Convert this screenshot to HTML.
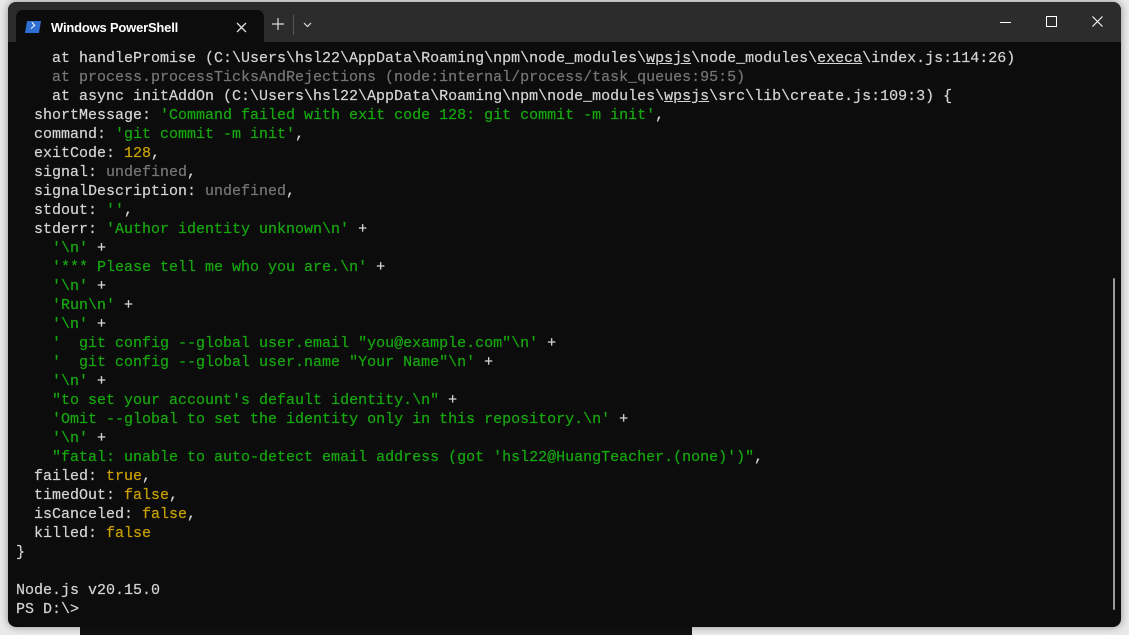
<!DOCTYPE html>
<html><head><meta charset="utf-8"><style>
html,body{margin:0;padding:0;width:1129px;height:635px;overflow:hidden;background:#e9e9e9;position:relative}
.dk{position:absolute;left:80px;top:620px;width:612px;height:15px;background:#111}
.win{position:absolute;left:8px;top:2px;width:1113px;height:625px;background:#0c0c0c;border-radius:8px;overflow:hidden;box-shadow:0 0 8px rgba(0,0,0,.4)}
.tb{position:absolute;left:0;top:0;width:100%;height:40px;background:#2c2c2c}
.tab{position:absolute;left:8px;top:8px;width:248px;height:34px;background:#0c0c0c;border-radius:7px 7px 0 0}
.tab .t{position:absolute;left:35px;top:10px;font:13px "Liberation Sans",sans-serif;color:#fff;font-weight:bold;letter-spacing:-.2px}
.ps{position:absolute;left:10px;top:11px;width:14px;height:12px;background:#2f6fd1;transform:skewX(-10deg)}
.ps:after{content:"";position:absolute;left:3px;top:2px;width:4px;height:4px;border-right:1.5px solid #fff;border-bottom:1.5px solid #fff;transform:rotate(-45deg)}
pre{position:absolute;left:8px;top:47px;margin:0;font:15px/19px "Liberation Mono",monospace;color:#d4d4d4;-webkit-text-stroke:0.2px}
.g{color:#16a80f}.y{color:#c9a000}.m{color:#767676}u{text-decoration:underline}
.sb{position:absolute;left:1105px;top:276px;width:2px;height:332px;background:#9a9a9a;border-radius:1px}
</style></head><body>
<div class="dk"></div>
<div class="win">
<div class="tb"></div>
<div class="tab"><div class="ps"></div><div class="t">Windows PowerShell</div>
<svg style="position:absolute;left:220px;top:12px" width="11" height="11"><path d="M1 1L10 10M10 1L1 10" stroke="#ddd" stroke-width="1.3"/></svg></div>
<svg style="position:absolute;left:264px;top:16px" width="12" height="12"><path d="M6 0V12M0 6H12" stroke="#ddd" stroke-width="1.2"/></svg>
<div style="position:absolute;left:285px;top:13px;width:1px;height:20px;background:#555"></div>
<svg style="position:absolute;left:295px;top:20px" width="9" height="6"><path d="M1 1L4.5 4.5L8 1" stroke="#ddd" fill="none" stroke-width="1.2"/></svg>
<div style="position:absolute;left:992px;top:20px;width:11px;height:1px;background:#fff"></div>
<div style="position:absolute;left:1038px;top:14px;width:9px;height:9px;border:1px solid #fff"></div>
<svg style="position:absolute;left:1084px;top:14px" width="11" height="11"><path d="M0.5 0.5L10.5 10.5M10.5 0.5L0.5 10.5" stroke="#fff" stroke-width="1.1"/></svg>
<pre>    at handlePromise (C:\Users\hsl22\AppData\Roaming\npm\node_modules\<u>wpsjs</u>\node_modules\<u>execa</u>\index.js:114:26)
<span class="m">    at process.processTicksAndRejections (node:internal/process/task_queues:95:5)</span>
    at async initAddOn (C:\Users\hsl22\AppData\Roaming\npm\node_modules\<u>wpsjs</u>\src\lib\create.js:109:3) {
  shortMessage: <span class="g">'Command failed with exit code 128: git commit -m init'</span>,
  command: <span class="g">'git commit -m init'</span>,
  exitCode: <span class="y">128</span>,
  signal: <span class="m">undefined</span>,
  signalDescription: <span class="m">undefined</span>,
  stdout: <span class="g">''</span>,
  stderr: <span class="g">'Author identity unknown\n'</span> +
    <span class="g">'\n'</span> +
    <span class="g">'*** Please tell me who you are.\n'</span> +
    <span class="g">'\n'</span> +
    <span class="g">'Run\n'</span> +
    <span class="g">'\n'</span> +
    <span class="g">'  git config --global user.email "you@example.com"\n'</span> +
    <span class="g">'  git config --global user.name "Your Name"\n'</span> +
    <span class="g">'\n'</span> +
    <span class="g">"to set your account's default identity.\n"</span> +
    <span class="g">'Omit --global to set the identity only in this repository.\n'</span> +
    <span class="g">'\n'</span> +
    <span class="g">"fatal: unable to auto-detect email address (got 'hsl22@HuangTeacher.(none)')"</span>,
  failed: <span class="y">true</span>,
  timedOut: <span class="y">false</span>,
  isCanceled: <span class="y">false</span>,
  killed: <span class="y">false</span>
}

Node.js v20.15.0
PS D:\&gt;</pre>
<div class="sb"></div>
</div>
</body></html>
